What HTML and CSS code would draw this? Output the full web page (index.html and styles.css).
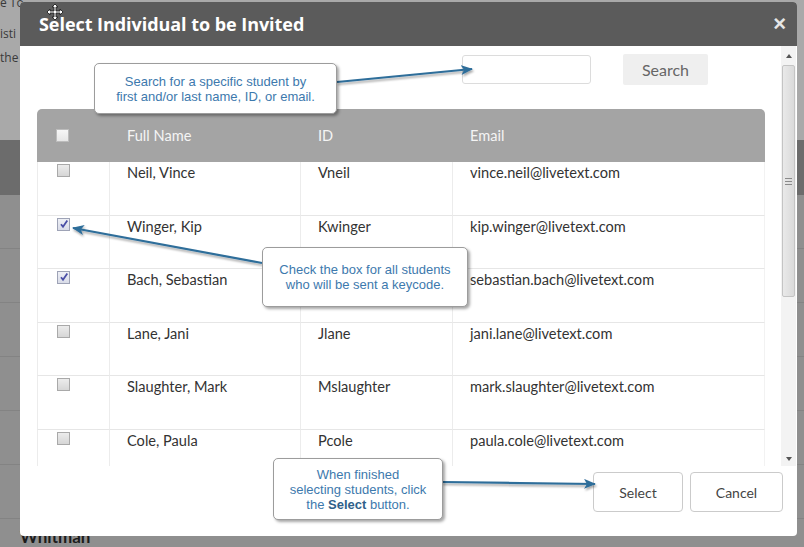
FILE: index.html
```html
<!DOCTYPE html>
<html>
<head>
<meta charset="utf-8">
<link rel="stylesheet" href="styles.css">
</head>
<body>
<div class="page">
  <div class="page-top">
    <p class="pt-line">e To</p>
    <p class="pt-line">isti</p>
    <p class="pt-line">the</p>
  </div>
  <div class="page-band"></div>
  <div class="page-rows">
    <div class="page-row"></div>
    <div class="page-row"></div>
    <div class="page-row"></div>
    <div class="page-row"></div>
    <div class="page-row"></div>
    <div class="page-row"></div>
    <div class="page-row last"><span class="bg-name">Whitman</span></div>
  </div>
</div>

<div class="modal">
  <div class="modal-header">
    <h1 class="modal-title">Select Individual to be Invited</h1>
    <span class="modal-close">×</span>
  </div>
  <div class="modal-main">
    <div class="scroll-content">
      <div class="search-row">
        <input class="search-input" type="text">
        <button class="search-btn">Search</button>
      </div>
      <table class="students">
        <thead>
          <tr>
            <th class="c-check"><span class="cb"></span></th>
            <th class="c-name">Full Name</th>
            <th class="c-id">ID</th>
            <th class="c-email">Email</th>
          </tr>
        </thead>
        <tbody>
          <tr>
            <td class="c-check"><span class="cb"></span></td>
            <td>Neil, Vince</td><td>Vneil</td><td>vince.neil@livetext.com</td>
          </tr>
          <tr>
            <td class="c-check"><span class="cb checked"><svg viewBox="0 0 12 12" width="12" height="12"><path d="M3 6.3 L5 8.8 L9.3 2.6" fill="none" stroke="#4a4fa6" stroke-width="1.8"/></svg></span></td>
            <td>Winger, Kip</td><td>Kwinger</td><td>kip.winger@livetext.com</td>
          </tr>
          <tr>
            <td class="c-check"><span class="cb checked"><svg viewBox="0 0 12 12" width="12" height="12"><path d="M3 6.3 L5 8.8 L9.3 2.6" fill="none" stroke="#4a4fa6" stroke-width="1.8"/></svg></span></td>
            <td>Bach, Sebastian</td><td></td><td>sebastian.bach@livetext.com</td>
          </tr>
          <tr>
            <td class="c-check"><span class="cb"></span></td>
            <td>Lane, Jani</td><td>Jlane</td><td>jani.lane@livetext.com</td>
          </tr>
          <tr>
            <td class="c-check"><span class="cb"></span></td>
            <td>Slaughter, Mark</td><td>Mslaughter</td><td>mark.slaughter@livetext.com</td>
          </tr>
          <tr>
            <td class="c-check"><span class="cb"></span></td>
            <td>Cole, Paula</td><td>Pcole</td><td>paula.cole@livetext.com</td>
          </tr>
        </tbody>
      </table>
    </div>
    <div class="scrollbar">
      <div class="sb-btn"><span class="tri-up"></span></div>
      <div class="sb-thumb"><span class="grip"></span><span class="grip"></span><span class="grip"></span></div>
      <div class="sb-track"></div>
      <div class="sb-btn"><span class="tri-down"></span></div>
    </div>
  </div>
  <div class="modal-footer">
    <button class="btn btn-select">Select</button>
    <button class="btn btn-cancel">Cancel</button>
  </div>
</div>

<svg class="annotations" width="804" height="547" viewBox="0 0 804 547">
  <defs>
    <marker id="ah" viewBox="0 0 12 10" refX="11" refY="5" markerWidth="12" markerHeight="10" markerUnits="userSpaceOnUse" orient="auto">
      <path d="M0 0 L12 5 L0 10 L3 5 Z" fill="#2f6e9a"/>
    </marker>
    <filter id="sh" x="-10%" y="-50%" width="130%" height="300%">
      <feDropShadow dx="1" dy="2" stdDeviation="1.2" flood-color="#000" flood-opacity="0.35"/>
    </filter>
  </defs>
  <g filter="url(#sh)" stroke="#2f6e9a" stroke-width="2.2" fill="none">
    <line x1="337" y1="82" x2="472" y2="69" marker-end="url(#ah)"/>
    <line x1="262" y1="263" x2="73" y2="228" marker-end="url(#ah)"/>
    <line x1="442" y1="482" x2="595" y2="484" marker-end="url(#ah)"/>
  </g>
  <g class="cursor" transform="translate(55 12)">
    <path d="M0 -8 L3 -5 L1 -5 L1 -1 L5 -1 L5 -3 L8 0 L5 3 L5 1 L1 1 L1 5 L3 5 L0 8 L-3 5 L-1 5 L-1 1 L-5 1 L-5 3 L-8 0 L-5 -3 L-5 -1 L-1 -1 L-1 -5 L-3 -5 Z" fill="#fff" stroke="#222" stroke-width="0.9"/>
  </g>
</svg>

<div class="callout callout-search"><span>Search for a specific student by<br>first and/or last name, ID, or email.</span></div>
<div class="callout callout-check"><span>Check the box for all students<br>who will be sent a keycode.</span></div>
<div class="callout callout-select"><span>When finished<br>selecting students, click<br>the <b>Select</b> button.</span></div>
</body>
</html>
```
FILE: styles.css
```css
html, body {
  margin: 0;
  padding: 0;
}
body {
  width: 804px;
  height: 547px;
  overflow: hidden;
  background: #8f8f8f;
  font-family: Lato, "Liberation Sans", sans-serif;
  position: relative;
}

/* dimmed page behind the dialog */
.page {
  display: flex;
  flex-direction: column;
}
.page-top {
  height: 140px;
  background: #a9a9a9;
  box-sizing: border-box;
}
.pt-line {
  margin: 0 0 8px 0;
  font-family: "Open Sans", sans-serif;
  font-size: 12px;
  line-height: 16px;
  color: #3a3a3a;
  white-space: nowrap;
}
.pt-line:first-child {
  margin-top: -5px;
  margin-bottom: 15px;
}
.page-band {
  height: 55px;
  background: #6c6c6c;
}
.page-rows {
  display: flex;
  flex-direction: column;
}
.page-row {
  height: 54px;
  border-bottom: 1px solid #838383;
  box-sizing: border-box;
}
.page-row.last {
  height: 80px;
  border-bottom: 0;
  padding: 7px 0 0 20px;
}
.bg-name {
  font-size: 17px;
  color: #1c1c1c;
  font-weight: 700;
}

/* dialog */
.modal {
  position: absolute;
  left: 20px;
  top: 2px;
  width: 777px;
  height: 534px;
  background: #fff;
  border-radius: 4px;
  overflow: hidden;
  display: flex;
  flex-direction: column;
}
.modal-header {
  height: 44px;
  background: #5b5b5b;
  display: flex;
  align-items: center;
  justify-content: space-between;
  padding: 0 11px 0 19px;
  flex: none;
}
.modal-title {
  margin: 0;
  font-family: "Open Sans", sans-serif;
  font-weight: 700;
  font-size: 18px;
  color: #fff;
  letter-spacing: -0.05px;
}
.modal-close {
  font-family: "Liberation Sans", sans-serif;
  font-weight: 700;
  font-size: 22px;
  color: #e6e6e6;
  line-height: 1;
}
.modal-main {
  height: 420px;
  display: flex;
  flex: none;
}
.scroll-content {
  flex: 1;
  overflow: hidden;
  padding: 9px 17px 0 17px;
}
.search-row {
  display: flex;
  justify-content: flex-end;
  gap: 32px;
  padding-right: 56px;
  height: 30px;
  margin-bottom: 24px;
}
.search-input {
  width: 129px;
  height: 29px;
  box-sizing: border-box;
  border: 1px solid #dcdcdc;
  border-radius: 3px;
  background: #fff;
  margin: 0;
}
.search-btn {
  width: 85px;
  height: 31px;
  margin: -1px 0 0 0;
  border: 0;
  border-radius: 2px;
  background: #efefef;
  color: #666;
  font-family: Lato, sans-serif;
  font-size: 16px;
}

.students {
  width: 728px;
  border-collapse: separate;
  border-spacing: 0;
  table-layout: fixed;
  font-size: 14.6px;
  color: #333;
}
.students th,
.students td {
  box-sizing: border-box;
}
.students th {
  height: 53px;
  background: #a4a4a4;
  color: #f4f4f4;
  font-weight: 400;
  text-align: left;
  padding: 0 0 0 17px;
  vertical-align: middle;
}
.students th:first-child {
  border-top-left-radius: 5px;
}
.students th:last-child {
  border-top-right-radius: 5px;
}
.students .c-check { width: 73px; }
.students .c-name { width: 191px; }
.students .c-id { width: 152px; }
.students th.c-check,
.students td.c-check {
  padding: 0 0 0 19px;
}
.students td {
  height: 53.6px;
  vertical-align: top;
  padding: 1px 0 0 17px;
  line-height: 20px;
  border-right: 1px solid #ececec;
  border-bottom: 1px solid #e6e6e6;
}
.students td:first-child {
  border-left: 1px solid #ececec;
}
.students td:last-child {
  border-right: 1px solid #f2f2f2;
}
.students td.c-check {
  padding-top: 2px;
}
.cb {
  display: inline-block;
  width: 13px;
  height: 13px;
  box-sizing: border-box;
  border: 1px solid #a9a9a9;
  background: linear-gradient(#ececec, #d6d6d6);
  vertical-align: top;
  position: relative;
}
.students th .cb {
  vertical-align: middle;
  margin-top: -3px;
  border-color: #bcbcbc;
  background: linear-gradient(#f6f6f6, #e6e6e6);
}
.cb.checked {
  background: linear-gradient(#eef0f6, #d9dce8);
  border-color: #9ea3b6;
}
.cb svg {
  position: absolute;
  left: 0;
  top: -1px;
}

.scrollbar {
  width: 15px;
  margin-right: 1px;
  background: #f3f3f3;
  display: flex;
  flex-direction: column;
  align-items: center;
  padding-top: 3px;
  box-sizing: border-box;
}
.sb-btn {
  height: 14px;
  width: 15px;
  display: flex;
  align-items: center;
  justify-content: center;
  flex: none;
}
.tri-up {
  width: 0; height: 0;
  border-left: 3.5px solid transparent;
  border-right: 3.5px solid transparent;
  border-bottom: 4px solid #555;
}
.tri-down {
  width: 0; height: 0;
  border-left: 3.5px solid transparent;
  border-right: 3.5px solid transparent;
  border-top: 4px solid #555;
}
.sb-thumb {
  margin-top: 2px;
  width: 13px;
  height: 232px;
  box-sizing: border-box;
  border: 1px solid #c4c4c4;
  border-radius: 2px;
  background: linear-gradient(to right, #e9e9e9, #dadada);
  display: flex;
  flex-direction: column;
  align-items: center;
  justify-content: center;
  gap: 2px;
  flex: none;
}
.grip {
  width: 7px;
  height: 1px;
  background: #8a8a8a;
}
.sb-track {
  flex: 1;
}

.modal-footer {
  flex: 1;
  display: flex;
  justify-content: flex-end;
  align-items: flex-start;
  gap: 7px;
  padding: 6px 14px 0 0;
}
.btn {
  height: 40px;
  border: 1px solid #cbcbcb;
  border-radius: 4px;
  background: #fff;
  color: #444;
  font-family: Lato, sans-serif;
  font-size: 14px;
  margin: 0;
}
.btn-select { width: 90px; }
.btn-cancel { width: 93px; }

/* annotations over the screenshot */
.annotations {
  position: absolute;
  left: 0;
  top: 0;
  pointer-events: none;
}
.callout {
  position: absolute;
  background: #fff;
  border: 1.5px solid #9c9c9c;
  border-radius: 5px;
  box-shadow: 2px 2px 3px rgba(0,0,0,0.35);
  font-family: "Liberation Sans", Arial, sans-serif;
  font-size: 13px;
  line-height: 15px;
  color: #3d79ad;
  text-align: center;
  box-sizing: border-box;
  display: flex;
  align-items: center;
  justify-content: center;
}
.callout b { color: #2f5f8a; }
.callout-search {
  left: 94px;
  top: 63px;
  width: 243px;
  height: 51px;
}
.callout-check {
  left: 262px;
  top: 247px;
  width: 206px;
  height: 60px;
}
.callout-select {
  left: 273px;
  top: 458px;
  width: 170px;
  height: 62px;
}
```
